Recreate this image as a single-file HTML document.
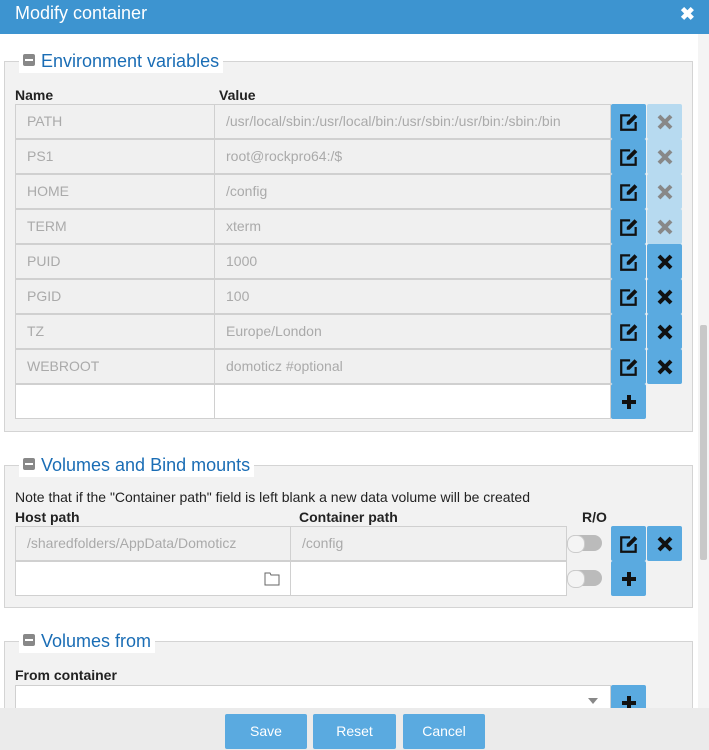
<!DOCTYPE html>
<html><head><style>
*{box-sizing:border-box;margin:0;padding:0}
body{width:709px;height:750px;overflow:hidden;background:#fff;font-family:"Liberation Sans",sans-serif;font-size:14px;color:#222;position:relative}
.hdr{position:absolute;left:0;top:0;width:709px;height:34px;background:#3d94d0;color:#fff;font-size:18px;padding:3px 15px}
.hdr .x{position:absolute;right:14px;top:4px;font-size:18px;font-weight:bold}
.sb{position:absolute;left:698px;top:34px;width:11px;height:674px;background:#f4f4f4}
.sb .t{position:absolute;left:2px;top:291px;width:7px;height:235px;background:#c8c8c8;border-radius:2px}
.fs{position:absolute;left:4px;width:689px;background:#f2f2f2;border:1px solid #d4d4d4}
.lg{position:absolute;left:14px;top:-13px;background:#fff;padding:0 4px;font-size:18px;color:#1a6db5;height:24px;line-height:24px}
.lg i{display:inline-block;width:12px;height:12px;background:#888;border-radius:2px;vertical-align:1px;margin-right:6px;position:relative}
.lg i:after{content:"";position:absolute;left:2px;top:5px;width:8px;height:2px;background:#fff}
.lab{position:absolute;font-weight:bold;font-size:14px}
.in{position:absolute;height:35px;border:1px solid #d0d0d0;background:#f0f0f0;color:#aaa;padding:8px 11px;font-size:14px;white-space:nowrap;overflow:hidden}
.in.w{background:#fff}
.b{position:absolute;width:35px;height:35px;background:#5aaae0;border-radius:2px;display:flex;align-items:center;justify-content:center}
.b.l{background:#b7daf0}
.tg{position:absolute;width:35px;height:16px;background:#bbb;border-radius:8px}
.tg:after{content:"";position:absolute;left:0;top:0;width:16px;height:16px;border-radius:8px;background:#f4f4f4;border:1px solid #ccc}
.foot{position:absolute;left:0;top:708px;width:709px;height:42px;background:#ebebeb}
.fb{position:absolute;top:6px;height:35px;background:#5aaae0;color:#fff;font-size:14px;text-align:center;line-height:35px;border-radius:2px}
</style></head><body>
<div class="hdr">Modify container<span class="x">✖</span></div>
<div class="sb"><div class="t"></div></div>

<div class="fs" style="top:61px;height:371px">
<div class="lg"><i></i>Environment variables</div>
</div>
<div class="lab" style="left:15px;top:87px">Name</div>
<div class="lab" style="left:219px;top:87px">Value</div>

<div id="env"></div>

<div class="fs" style="top:465px;height:143px">
<div class="lg"><i></i>Volumes and Bind mounts</div>
</div>
<div style="position:absolute;left:15px;top:489px;font-size:14px">Note that if the "Container path" field is left blank a new data volume will be created</div>
<div class="lab" style="left:15px;top:509px">Host path</div>
<div class="lab" style="left:299px;top:509px">Container path</div>
<div class="lab" style="left:582px;top:509px">R/O</div>
<div class="in" style="left:15px;top:526px;width:276px">/sharedfolders/AppData/Domoticz</div>
<div class="in" style="left:290px;top:526px;width:277px">/config</div>
<div class="tg" style="left:567px;top:535px"></div>
<div class="b" style="left:611px;top:526px"><svg width="20" height="20" viewBox="0 0 18 18"><path d="M1 2h9v2H3v11h11V9h2v8H1z M7 9l7-7 2.5 2.5-7 7H7z" fill="#111"/></svg></div>
<div class="b" style="left:647px;top:526px"><svg width="18" height="18" viewBox="0 0 18 18"><path d="M3 3L15 15M15 3L3 15" stroke="#111" stroke-width="4"/></svg></div>
<div class="in w" style="left:15px;top:561px;width:276px"><svg style="position:absolute;right:10px;top:10px" width="16" height="14" viewBox="0 0 16 14"><path d="M1 1h5l1 2h8v10H1z" fill="none" stroke="#666"/></svg></div>
<div class="in w" style="left:290px;top:561px;width:277px"></div>
<div class="tg" style="left:567px;top:570px"></div>
<div class="b" style="left:611px;top:561px"><svg width="18" height="18" viewBox="0 0 18 18"><path d="M9 2v14M2 9h14" stroke="#111" stroke-width="4"/></svg></div>

<div class="fs" style="top:641px;height:80px">
<div class="lg"><i></i>Volumes from</div>
</div>
<div class="lab" style="left:15px;top:667px">From container</div>
<div class="in w" style="left:15px;top:685px;width:596px"><span style="position:absolute;right:12px;top:12px;width:0;height:0;border-left:5px solid transparent;border-right:5px solid transparent;border-top:6px solid #888"></span></div>
<div class="b" style="left:611px;top:685px"><svg width="18" height="18" viewBox="0 0 18 18"><path d="M9 2v14M2 9h14" stroke="#111" stroke-width="4"/></svg></div>

<div class="foot">
<div class="fb" style="left:225px;width:82px">Save</div>
<div class="fb" style="left:313px;width:83px">Reset</div>
<div class="fb" style="left:403px;width:82px">Cancel</div>
</div>

<script>
var rows=[["PATH","/usr/local/sbin:/usr/local/bin:/usr/sbin:/usr/bin:/sbin:/bin",1],["PS1","root@rockpro64:/$",1],["HOME","/config",1],["TERM","xterm",1],["PUID","1000",0],["PGID","100",0],["TZ","Europe/London",0],["WEBROOT","domoticz #optional",0]];
var h="",ed='<svg width="20" height="20" viewBox="0 0 18 18"><path d="M1 2h9v2H3v11h11V9h2v8H1z M7 9l7-7 2.5 2.5-7 7H7z" fill="#111"/></svg>';
rows.forEach(function(r,i){var y=104+i*35;
h+='<div class="in" style="left:15px;top:'+y+'px;width:200px">'+r[0]+'</div><div class="in" style="left:214px;top:'+y+'px;width:397px">'+r[1]+'</div><div class="b" style="left:611px;top:'+y+'px">'+ed+'</div><div class="b'+(r[2]?' l':'')+'" style="left:647px;top:'+y+'px"><svg width="18" height="18" viewBox="0 0 18 18"><path d="M3 3L15 15M15 3L3 15" stroke="'+(r[2]?'#888':'#111')+'" stroke-width="4"/></svg></div>';});
var y=384;
h+='<div class="in w" style="left:15px;top:'+y+'px;width:200px"></div><div class="in w" style="left:214px;top:'+y+'px;width:397px"></div><div class="b" style="left:611px;top:'+y+'px"><svg width="18" height="18" viewBox="0 0 18 18"><path d="M9 2v14M2 9h14" stroke="#111" stroke-width="4"/></svg></div>';
document.getElementById("env").innerHTML=h;
</script>
</body></html>
